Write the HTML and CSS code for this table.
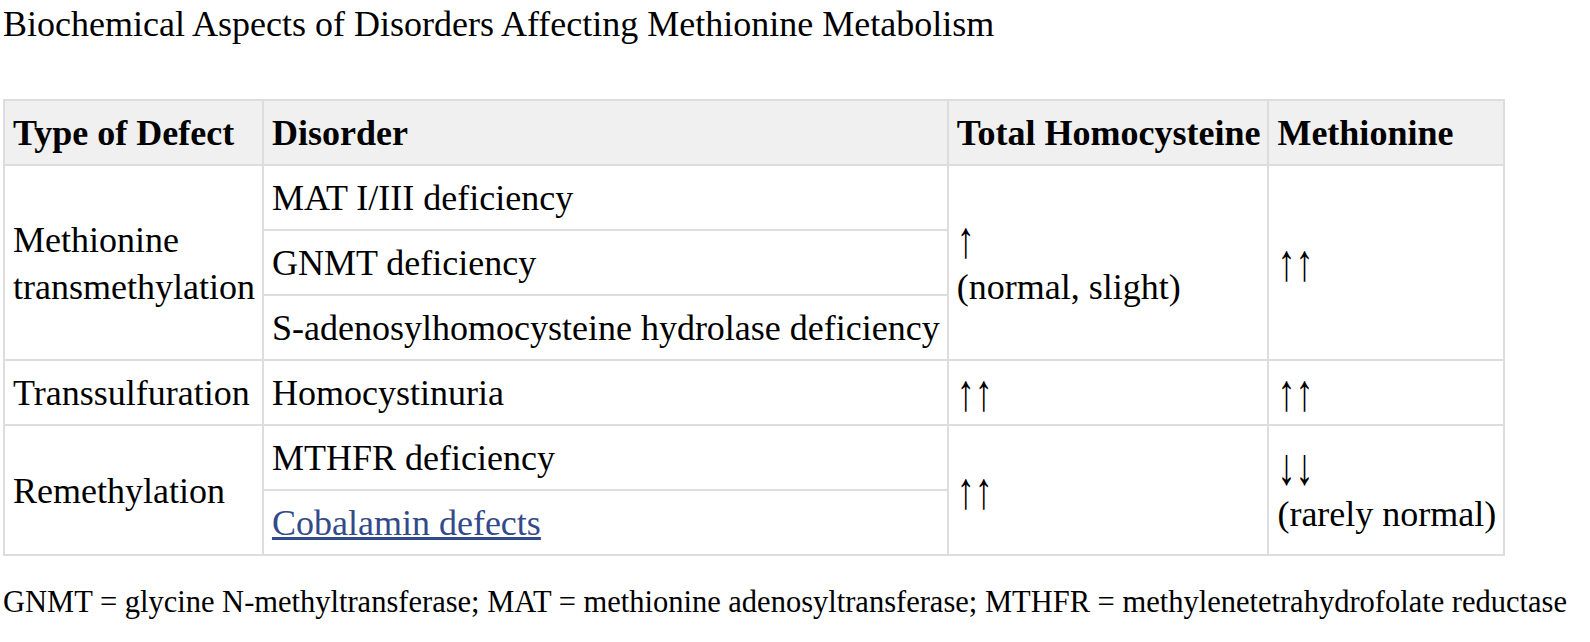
FILE: index.html
```html
<!DOCTYPE html>
<html>
<head>
<meta charset="utf-8">
<link rel="stylesheet" href="styles.css">
</head>
<body>
<div class="page">
  <p class="title">Biochemical Aspects of Disorders Affecting Methionine Metabolism</p>
  <table class="tbl">
    <thead>
      <tr>
        <th>Type of Defect</th>
        <th>Disorder</th>
        <th>Total Homocysteine</th>
        <th>Methionine</th>
      </tr>
    </thead>
    <tbody>
      <tr>
        <td rowspan="3">Methionine<br>transmethylation</td>
        <td>MAT I/III deficiency</td>
        <td rowspan="3"><span class="arr">↑</span><br>(normal, slight)</td>
        <td rowspan="3"><span class="arr">↑↑</span></td>
      </tr>
      <tr><td>GNMT deficiency</td></tr>
      <tr><td>S-adenosylhomocysteine hydrolase deficiency</td></tr>
      <tr>
        <td>Transsulfuration</td>
        <td>Homocystinuria</td>
        <td><span class="arr">↑↑</span></td>
        <td><span class="arr">↑↑</span></td>
      </tr>
      <tr>
        <td rowspan="2">Remethylation</td>
        <td>MTHFR deficiency</td>
        <td rowspan="2"><span class="arr">↑↑</span></td>
        <td rowspan="2"><span class="arr">↓↓</span><br>(rarely normal)</td>
      </tr>
      <tr><td><a href="#" class="lnk">Cobalamin defects</a></td></tr>
    </tbody>
  </table>
  <p class="foot">GNMT = glycine N-methyltransferase; MAT = methionine adenosyltransferase; MTHFR = methylenetetrahydrofolate reductase</p>
</div>
</body>
</html>
```

FILE: styles.css
```css
html, body {
  margin: 0;
  padding: 0;
  background: #ffffff;
}
.page {
  padding: 0 3px;
  font-family: "Liberation Serif", "Times New Roman", serif;
  color: #000;
}
.title {
  margin: 0;
  padding-top: 4px;
  font-size: 36px;
  line-height: 41px;
}
.tbl {
  margin-top: 54px;
  border-collapse: collapse;
  font-size: 36px;
}
.tbl th, .tbl td {
  border: 2px solid #dddddd;
  padding: 9px 7px 7px 8px;
  line-height: 47px;
  text-align: left;
  vertical-align: middle;
}
.tbl th {
  background: #f0f0f0;
  font-weight: bold;
}
.arr {
  display: inline-block;
  line-height: 30px;
  transform: scaleY(1.45);
}
.lnk {
  color: #334a8a;
  text-decoration: underline;
}
.foot {
  margin: 29px 0 0 0;
  font-size: 30.5px;
  line-height: 34px;
}
```
